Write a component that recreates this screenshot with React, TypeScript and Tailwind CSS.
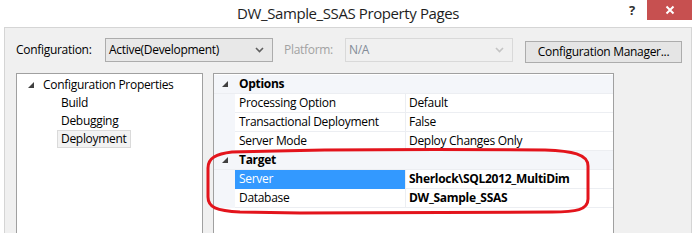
import React from "react";

const font = { fontFamily: '"Segoe UI", "Open Sans", "Noto Sans", sans-serif' };

type Row = { name: string; value: string; bold?: boolean; selected?: boolean };

const groups: { title: string; rows: Row[] }[] = [
  {
    title: "Options",
    rows: [
      { name: "Processing Option", value: "Default" },
      { name: "Transactional Deployment", value: "False" },
      { name: "Server Mode", value: "Deploy Changes Only" },
    ],
  },
  {
    title: "Target",
    rows: [
      { name: "Server", value: "Sherlock\\SQL2012_MultiDim", bold: true, selected: true },
      { name: "Database", value: "DW_Sample_SSAS", bold: true },
    ],
  },
];

function Caret() {
  return (
    <svg width="6" height="6" viewBox="0 0 6 6" className="shrink-0">
      <polygon points="6,0 6,6 0,6" fill="#404040" />
    </svg>
  );
}

function Chevron({ color }: { color: string }) {
  return (
    <svg width="9" height="6" viewBox="0 0 9 6">
      <path d="M1 1 L4.5 4.5 L8 1" stroke={color} strokeWidth="1.6" fill="none" />
    </svg>
  );
}

export default function App() {
  return (
    <div className="relative w-[696px] h-[233px] overflow-hidden bg-white text-[12px] tracking-[-0.3px] text-black" style={font}>
      {/* title bar */}
      <div className="relative h-[27px] flex items-center justify-center bg-white">
        <span className="text-[15px] tracking-[-0.4px] text-[#1e1e1e] mt-[-1px]">DW_Sample_SSAS Property Pages</span>
        <span className="absolute left-[629px] top-[1px] text-[13px] font-bold text-[#303030]">?</span>
        <div className="absolute left-[647px] top-0 w-[45px] h-[20px] bg-[#c75050] flex items-center justify-center">
          <svg width="10" height="10" viewBox="0 0 10 10">
            <path d="M1.5 1.5 L8.5 8.5 M8.5 1.5 L1.5 8.5" stroke="#fff" strokeWidth="2" />
          </svg>
        </div>
      </div>

      {/* dialog body */}
      <div className="ml-[4px] w-[688px] h-[206px] border-l border-t border-r border-[#d5d5d5] bg-[#f0f0f0] pl-[11px]">
        <div className="mt-[10px] flex items-start h-[24px]">
          <span className="w-[89px] h-[24px] flex items-center">Configuration:</span>
          <div className="w-[168px] h-[24px] border border-[#acacac] bg-[#e8e8e8] flex items-center pl-[3px] pr-[8px]">
            <span className="flex-1">Active(Development)</span>
            <Chevron color="#606060" />
          </div>
          <span className="ml-[11px] w-[61px] h-[24px] flex items-center text-[#a2a2a2]">Platform:</span>
          <div className="w-[168px] h-[24px] border border-[#d9d9d9] bg-[#f0f0f0] flex items-center pl-[3px] pr-[8px]">
            <span className="flex-1 text-[#838b97]">N/A</span>
            <Chevron color="#c4c4c4" />
          </div>
          <div className="ml-[12px] mt-[3px] w-[157px] h-[22px] border border-[#acacac] bg-[#e5e5e5] flex items-center justify-center">
            Configuration Manager...
          </div>
        </div>

        <div className="mt-[11px] flex gap-[10px]">
          {/* tree */}
          <div className="w-[187px] h-[170px] border border-[#a0a0a0] bg-white pt-[2px]">
            <div className="h-[18px] flex items-center pl-[11px] gap-[9px]">
              <Caret />
              <span>Configuration Properties</span>
            </div>
            <div className="h-[18px] flex items-center pl-[44px]">Build</div>
            <div className="h-[18px] flex items-center pl-[44px]">Debugging</div>
            <div className="h-[18px] flex items-center pl-[40px]">
              <span className="h-[18px] flex items-center px-[3px] border border-[#dadada] bg-[#f2f2f2]">Deployment</span>
            </div>
          </div>

          {/* property grid */}
          <div className="w-[401px] h-[170px] border border-[#a0a0a0] bg-white pt-[1px]">
            {groups.map((g) => (
              <div key={g.title}>
                <div className="h-[19px] flex items-center bg-[#f4f6fa] border-b border-[#eceef2]">
                  <div className="w-[21px] flex justify-center">
                    <Caret />
                  </div>
                  <span className="pl-[4px] font-bold">{g.title}</span>
                </div>
                {g.rows.map((r) => (
                  <div key={r.name} className="h-[19px] flex">
                    <div className="w-[21px] bg-[#f4f6fa]" />
                    <div
                      className={
                        r.selected
                          ? "w-[170px] flex items-center pl-[4px] bg-[#3399ff] text-white border-b border-[#3399ff]"
                          : "w-[170px] flex items-center pl-[4px] border-b border-[#eceef2]"
                      }
                    >
                      {r.name}
                    </div>
                    <div
                      className={
                        r.bold
                          ? "flex-1 flex items-center pl-[3px] font-bold border-l border-b border-[#eceef2]"
                          : "flex-1 flex items-center pl-[3px] border-l border-b border-[#eceef2]"
                      }
                    >
                      {r.value}
                    </div>
                  </div>
                ))}
              </div>
            ))}
          </div>
        </div>
      </div>

      {/* red annotation */}
      <svg className="absolute left-0 top-0 pointer-events-none" width="696" height="233">
        <path
          d="M232 152 C300 150 420 149 545 150 C572 151 588 154 588 166 L588 199 C588 210 576 212 552 212 L300 213 L240 212 C216 211 208 207 208 197 L208 168 C208 158 216 154 232 152 Z"
          stroke="#e3141c"
          strokeWidth="3"
          fill="none"
        />
      </svg>
    </div>
  );
}
